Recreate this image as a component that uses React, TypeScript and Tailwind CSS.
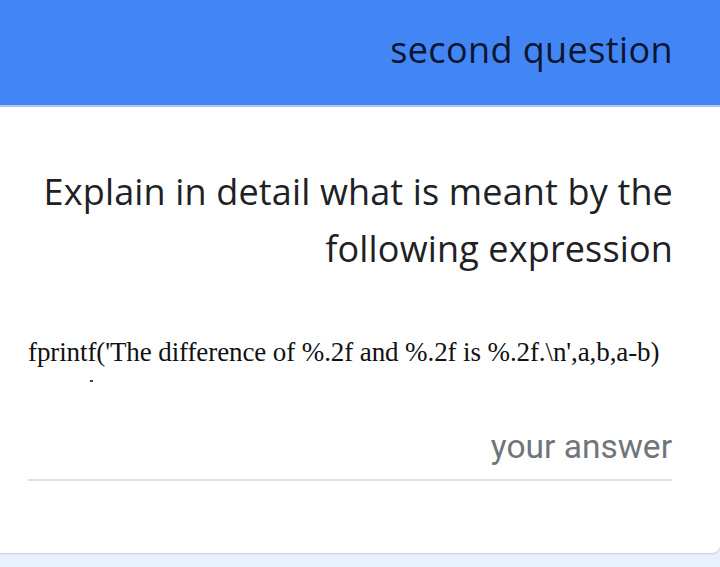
import React from 'react';

export default function App() {
  return (
    <div className="w-[720px] h-[567px] overflow-hidden bg-[#e8effd]">
      <div className="bg-white rounded-br-lg shadow-[0_1px_2px_rgba(0,0,0,0.15)]">
        <div className="h-[107px] bg-[#4285f4] border-b-2 border-[#a9c6fb] flex items-center justify-end pr-[47px] pb-[6px]">
          <h1 className="text-[36px] text-[#0d1530] font-['Open_Sans',sans-serif] tracking-[0.4px]">second question</h1>
        </div>
        <div className="pt-[56px] pr-[47px] text-right font-['Open_Sans',sans-serif] text-[36px] leading-[57px] text-[#202124] tracking-[0.15px]">
          Explain in detail what is meant by the
          <br />
          following expression
        </div>
        <div className="mt-[60px] pl-[28px] relative font-['Liberation_Serif',serif] text-[27px] leading-[30px] text-[#111] tracking-[-0.1px]">
          fprintf('The difference of %.2f and %.2f is %.2f.\n',a,b,a-b)
          <span className="absolute left-[90px] top-[43px] w-[3px] h-[2px] bg-[#444]" />
        </div>
        <div className="mt-[62px] ml-[28px] mr-[48px] pb-[14px] border-b-2 border-[#e2e2e2] text-right font-['Roboto',sans-serif] text-[33.5px] leading-[36px] text-[#70757a]">
          your answer
        </div>
        <div className="h-[72px]" />
      </div>
    </div>
  );
}
